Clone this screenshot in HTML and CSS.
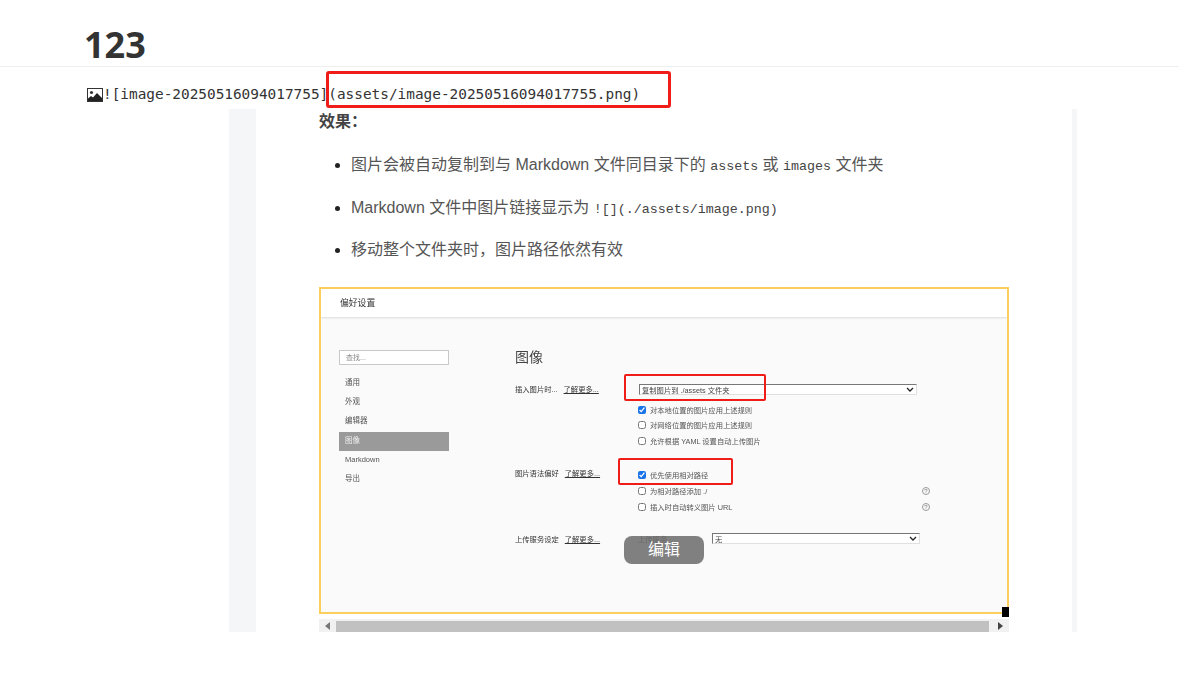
FILE: index.html
```html
<!DOCTYPE html>
<html lang="zh">
<head>
<meta charset="utf-8">
<title>123</title>
<link rel="stylesheet" href="styles.css">
</head>
<body>
<h1 class="title">123</h1>
<p class="source">
  <svg class="pic-icon" width="16" height="14" viewBox="0 0 16 14"><rect x="0.5" y="0.5" width="15" height="13" fill="#fff" stroke="#333"/><circle cx="4.5" cy="4.5" r="1.6" fill="#333"/><path d="M1 13V10.5L4 8l2 1.5L10 5l5 5v3z" fill="#222"/></svg><span>![image-20250516094017755](assets/image-20250516094017755.png)</span>
  <span class="mark mark-source"></span>
</p>
<main class="shot">
  <div class="strip-left"></div>
  <div class="article">
    <p class="effect">效果：</p>
    <ul class="points">
      <li>图片会被自动复制到与 Markdown 文件同目录下的 <code>assets</code> 或 <code>images</code> 文件夹</li>
      <li>Markdown 文件中图片链接显示为 <code>![](./assets/image.png)</code></li>
      <li>移动整个文件夹时，图片路径依然有效</li>
    </ul>
    <div class="figure">
      <div class="frame">
        <header class="prefs-head">偏好设置</header>
        <div class="prefs">
          <nav class="side">
            <div class="search">查找...</div>
            <div class="nav-item">通用</div>
            <div class="nav-item">外观</div>
            <div class="nav-item">编辑器</div>
            <div class="nav-item active">图像</div>
            <div class="nav-item">Markdown</div>
            <div class="nav-item">导出</div>
          </nav>
          <section class="pane">
            <h2 class="pane-title">图像</h2>
            <div class="group group-insert">
              <div class="label"><span>插入图片时...</span><a>了解更多...</a></div>
              <div class="controls">
                <div class="select select-wide">复制图片到 ./assets 文件夹<svg width="8" height="5" viewBox="0 0 8 5"><path d="M1 1l3 3 3-3" fill="none" stroke="#222" stroke-width="1.3"/></svg></div>
                <div class="checks">
                  <label class="check"><input type="checkbox" checked>对本地位置的图片应用上述规则</label>
                  <label class="check"><input type="checkbox">对网络位置的图片应用上述规则</label>
                  <label class="check"><input type="checkbox">允许根据 YAML 设置自动上传图片</label>
                </div>
              </div>
            </div>
            <div class="group group-syntax">
              <div class="label"><span>图片语法偏好</span><a>了解更多...</a></div>
              <div class="checks">
                <label class="check"><input type="checkbox" checked>优先使用相对路径</label>
                <label class="check"><input type="checkbox">为相对路径添加 ./<i class="help">?</i></label>
                <label class="check"><input type="checkbox">插入时自动转义图片 URL<i class="help">?</i></label>
              </div>
            </div>
            <div class="group group-upload">
              <div class="label"><span>上传服务设定</span><a>了解更多...</a></div>
              <div class="upload">
                <span class="upload-label">上传服务</span>
                <div class="select select-short">无<svg width="8" height="5" viewBox="0 0 8 5"><path d="M1 1l3 3 3-3" fill="none" stroke="#222" stroke-width="1.3"/></svg></div>
              </div>
            </div>
          </section>
        </div>
      </div>
      <span class="mark mark-select"></span>
      <span class="mark mark-relative"></span>
      <span class="edit-btn">编辑</span>
      <span class="handle"></span>
      <div class="scrollbar">
        <svg class="arrow" width="6" height="8" viewBox="0 0 6 8"><path d="M5 0v8L0 4z" fill="#777"/></svg>
        <div class="thumb"></div>
        <svg class="arrow arrow-end" width="6" height="8" viewBox="0 0 6 8"><path d="M0 0v8l5-4z" fill="#444"/></svg>
      </div>
    </div>
  </div>
  <div class="strip-right"></div>
</main>
</body>
</html>
```
FILE: styles.css
```css
* { box-sizing: border-box; }
html, body { margin: 0; padding: 0; background: #fff; }
body {
  width: 1179px;
  height: 686px;
  overflow: hidden;
  font-family: "Liberation Sans", "Noto Sans CJK SC", sans-serif;
  color: #333;
}
.title {
  margin: 0;
  height: 67px;
  padding: 20px 0 0 84px;
  border-bottom: 1px solid #eee;
  font: 700 36px/50px "Open Sans", sans-serif;
  color: #333;
}
.source {
  position: relative;
  display: flex;
  align-items: center;
  margin: 0;
  height: 42px;
  padding: 11px 0 0 87px;
  font: 14.4px/28px "DejaVu Sans Mono", monospace;
  color: #333;
  white-space: pre;
}
.pic-icon { flex: none; margin-top: 2px; }
.mark {
  position: absolute;
  border: 2px solid #f01c17;
  border-radius: 3px;
}
.mark-source { left: 326px; top: 4px; width: 345px; height: 37px; border-width: 3px; }
.shot {
  display: flex;
  margin-left: 229px;
  width: 848px;
  height: 523px;
  overflow: hidden;
}
.strip-left { flex: none; width: 27px; background: #f5f6f8; }
.strip-right { flex: none; width: 5px; background: #f5f6f8; }
.article {
  flex: 1;
  padding-left: 63px;
  font-size: 16px;
  color: #555;
}
.effect {
  margin: 0;
  height: 26px;
  font: 700 16px/25px "Liberation Sans", "Noto Sans CJK SC", sans-serif;
  color: #444;
}
.points {
  margin: 0 0 -1px;
  padding: 17px 0 0 32px;
  height: 153px;
  list-style: disc;
}
.points li { height: 42.5px; line-height: 26px; white-space: nowrap; }
.points li::marker { color: #222; }
.points code { font: 13.33px "Liberation Mono", monospace; color: #444; }
.figure { position: relative; width: 690px; }
.frame {
  width: 690px;
  height: 327px;
  border: 2px solid #fcce5c;
  background: #fafafa;
  color: #333;
  font-size: 8px;
  overflow: hidden;
}
.prefs-head {
  height: 28px;
  padding-left: 19px;
  background: #fff;
  box-shadow: 0 1px 2px rgba(0, 0, 0, .12);
  font-size: 8.8px;
  line-height: 29px;
  filter: blur(.25px);
}
.prefs {
  display: flex;
  height: 295px;
  filter: blur(.25px);
}
.side { flex: none; width: 110px; margin-left: 18px; padding-top: 33px; }
.search {
  height: 15px;
  padding-left: 6px;
  margin-bottom: 9px;
  border: 1px solid #c9c9c9;
  background: #fff;
  color: #888;
  font-size: 7px;
  line-height: 13px;
}
.nav-item { height: 19.2px; padding-left: 6px; font-size: 7.5px; line-height: 18px; color: #555; }
.nav-item.active { background: #9a9a9a; color: #eee; }
.pane { flex: 1; padding: 30px 0 0 66px; }
.pane-title { margin: 0 0 17px; font-size: 14px; font-weight: 400; line-height: 20px; color: #444; }
.group { display: flex; font-size: 7.3px; color: #333; }
.label { flex: none; display: flex; width: 123px; gap: 6px; line-height: 11px; white-space: nowrap; }
.label a { text-decoration: underline; }
.controls { flex: 1; }
.group-insert { height: 79px; }
.group-insert .check { height: 15.6px; }
.group-syntax { height: 70px; padding-top: 4px; }
.group-syntax .label { margin-top: 1px; }
.group-syntax .check { height: 16px; }
.group-upload .label { margin-top: 1px; }
.select {
  display: flex;
  align-items: center;
  justify-content: space-between;
  height: 11px;
  padding: 0 2px;
  border: 1px solid #e0e0e0;
  border-top-color: #777;
  border-left-color: #777;
  background: #fff;
  font-size: 7.3px;
  color: #444;
}
.select-wide { width: 278px; margin-left: 1px; margin-bottom: 7px; }
.select-short { width: 208px; }
.checks { display: flex; flex-direction: column; gap: 0; flex: 1; }
.check { position: relative; display: flex; align-items: center; height: 15.7px; white-space: nowrap; color: #555; }
.check input {
  width: 8px;
  height: 8px;
  margin: 0 4px 0 0;
  accent-color: #1a73e8;
}
.help {
  position: absolute;
  left: 284px;
  top: 4px;
  width: 8px;
  height: 8px;
  border: 1px solid #999;
  border-radius: 50%;
  font: 6px/6px "Liberation Sans", sans-serif;
  text-align: center;
  color: #777;
}
.upload { display: flex; align-items: flex-start; }
.upload-label { width: 74px; line-height: 11px; margin-top: 1px; }
.mark-select { left: 305px; top: 87px; width: 142px; height: 27px; border-radius: 2px; }
.mark-relative { left: 299px; top: 171px; width: 115px; height: 27px; border-radius: 2px; }
.edit-btn {
  position: absolute;
  left: 305px;
  top: 249px;
  width: 80px;
  height: 28px;
  border-radius: 8px;
  background: rgba(110, 110, 110, .88);
  color: #fff;
  font-size: 16px;
  line-height: 28px;
  text-align: center;
}
.handle { position: absolute; left: 683px; top: 320px; width: 7px; height: 10px; background: #000; }
.scrollbar {
  display: flex;
  align-items: center;
  height: 17px;
  margin-top: 5px;
  padding: 2px 0 0 6px;
  background: #f1f1f1;
}
.thumb { flex: none; width: 653px; height: 15px; margin-left: 5px; background: #c1c1c1; }
.arrow { flex: none; margin-top: -5px; }
.arrow-end { margin-left: 9px; }
```
